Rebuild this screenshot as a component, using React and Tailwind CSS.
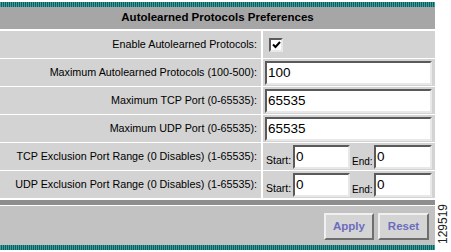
import React from "react";

const font = { fontFamily: '"Liberation Sans", Arial, sans-serif' };

function Stripe() {
  return (
    <div className="h-[5px] w-full bg-[repeating-linear-gradient(90deg,#3f9c9a_0px,#3f9c9a_1px,#0f5f5e_1px,#0f5f5e_2px)]" />
  );
}

function TextInput({ value, className = "" }) {
  return (
    <div
      className={
        "h-[24px] bg-white border-2 border-t-[#5a5a5a] border-l-[#5a5a5a] border-r-[#e8e8e8] border-b-[#e8e8e8] flex items-center pl-[1px] text-[13.5px] leading-none text-black " +
        className
      }
    >
      {value}
    </div>
  );
}

function Row({ label, children }) {
  return (
    <div className="flex h-[28px] border-b border-white">
      <div className="w-[263px] border-r-2 border-white flex items-center justify-end pr-[4px] text-[10.75px] text-black whitespace-nowrap">
        {label}
      </div>
      <div className="flex-1 flex items-center pl-[2px] pr-[3px]">{children}</div>
    </div>
  );
}

function RangeInputs() {
  return (
    <div className="flex items-end w-full h-[24px]">
      <span className="shrink-0 text-[10.5px] w-[28px] pl-[1px] whitespace-nowrap">Start:</span>
      <TextInput value="0" className="shrink-0 w-[57px]" />
      <span className="shrink-0 text-[10px] w-[24px] pl-[2px] whitespace-nowrap">End:</span>
      <TextInput value="0" className="flex-1" />
    </div>
  );
}

export default function App() {
  return (
    <div className="w-[451px] h-[252px] bg-white flex overflow-hidden" style={font}>
      <div className="w-[435px] flex flex-col pt-[2px]">
        <Stripe />
        <div className="h-[24px] bg-[#a6a6a6] flex items-center justify-center font-bold text-[11.5px] text-black border-b-2 border-white">
          Autolearned Protocols Preferences
        </div>
        <div className="bg-[#d3d3d3] flex flex-col">
          <Row label="Enable Autolearned Protocols:">
            <div className="ml-[4px] w-[14px] h-[14px] bg-white border-2 border-t-[#5a5a5a] border-l-[#5a5a5a] border-r-[#e8e8e8] border-b-[#e8e8e8] flex items-center justify-center">
              <svg width="9" height="8" viewBox="0 0 9 8">
                <path d="M1 3.5 L3.5 6 L8 1" stroke="#000" strokeWidth="2" fill="none" />
              </svg>
            </div>
          </Row>
          <Row label="Maximum Autolearned Protocols (100-500):">
            <TextInput value="100" className="w-full" />
          </Row>
          <Row label="Maximum TCP Port (0-65535):">
            <TextInput value="65535" className="w-full" />
          </Row>
          <Row label="Maximum UDP Port (0-65535):">
            <TextInput value="65535" className="w-full" />
          </Row>
          <Row label="TCP Exclusion Port Range (0 Disables) (1-65535):">
            <RangeInputs />
          </Row>
          <Row label="UDP Exclusion Port Range (0 Disables) (1-65535):">
            <RangeInputs />
          </Row>
        </div>
        <div className="h-[6px] bg-[#8e8e8e] border-b border-white mt-[1px]" />
        <div className="h-[39px] bg-[#c2c2c2] flex items-center justify-end gap-[4px] pr-[6px] pt-[2px]">
          <button className="w-[50px] h-[27px] bg-[#d4d4d4] border-2 border-t-[#f0f0f0] border-l-[#f0f0f0] border-r-[#6e6e6e] border-b-[#6e6e6e] text-[11.5px] font-bold text-[#6c6cbf]">
            Apply
          </button>
          <button className="w-[51px] h-[27px] bg-[#d4d4d4] border-2 border-t-[#f0f0f0] border-l-[#f0f0f0] border-r-[#6e6e6e] border-b-[#6e6e6e] text-[11.5px] font-bold text-[#6c6cbf]">
            Reset
          </button>
        </div>
        <Stripe />
      </div>
      <div className="flex-1 relative">
        <div className="absolute left-[2px] top-[198px] w-[12px] h-[52px] flex items-center justify-center">
          <span className="block -rotate-90 text-[12px] leading-none text-[#222] whitespace-nowrap">129519</span>
        </div>
      </div>
    </div>
  );
}
